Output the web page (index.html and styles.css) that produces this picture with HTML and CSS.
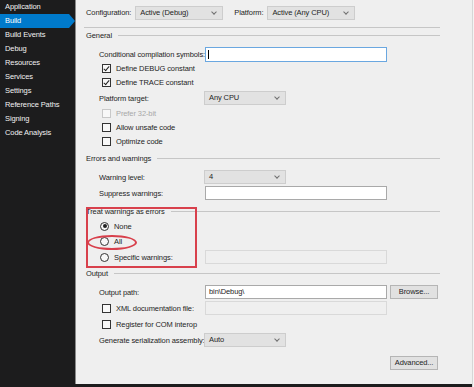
FILE: index.html
```html
<!DOCTYPE html>
<html lang="en">
<head>
  <meta charset="UTF-8">
  <title>Build properties</title>
  <link rel="stylesheet" href="styles.css">
</head>
<body>
  <nav class="sidebar">
    <div class="tab">Application</div>
    <div class="tab active">Build</div>
    <div class="tab">Build Events</div>
    <div class="tab">Debug</div>
    <div class="tab">Resources</div>
    <div class="tab">Services</div>
    <div class="tab">Settings</div>
    <div class="tab">Reference Paths</div>
    <div class="tab">Signing</div>
    <div class="tab">Code Analysis</div>
  </nav>

  <main class="panel">
    <div class="topbar">
      <span>Configuration:</span>
      <div class="select cfg">Active (Debug)</div>
      <span class="plat-label">Platform:</span>
      <div class="select cfg">Active (Any CPU)</div>
    </div>
    <div class="rule"></div>

    <div class="group first">General</div>
    <div class="row field first">
      <span class="label">Conditional compilation symbols:</span>
      <div class="input focus"><span class="caret"></span></div>
    </div>
    <div class="row"><span class="check on"></span>Define DEBUG constant</div>
    <div class="row"><span class="check on"></span>Define TRACE constant</div>
    <div class="row field">
      <span class="label">Platform target:</span>
      <div class="select short">Any CPU</div>
    </div>
    <div class="row disabled"><span class="check"></span>Prefer 32-bit</div>
    <div class="row"><span class="check"></span>Allow unsafe code</div>
    <div class="row"><span class="check"></span>Optimize code</div>

    <div class="group">Errors and warnings</div>
    <div class="row field first">
      <span class="label">Warning level:</span>
      <div class="select short">4</div>
    </div>
    <div class="row field">
      <span class="label">Suppress warnings:</span>
      <div class="input"></div>
    </div>

    <div class="group treat">Treat warnings as errors</div>
    <div class="row radio-row"><span class="radio on"></span>None</div>
    <div class="row radio-row"><span class="radio"></span>All</div>
    <div class="row radio-row field">
      <span class="label radio-label"><span class="radio"></span>Specific warnings:</span>
      <div class="input off"></div>
    </div>

    <div class="group output">Output</div>
    <div class="row field first">
      <span class="label">Output path:</span>
      <div class="input">bin\Debug\</div>
      <div class="button">Browse...</div>
    </div>
    <div class="row field">
      <span class="label check-label"><span class="check"></span>XML documentation file:</span>
      <div class="input off"></div>
    </div>
    <div class="row field"><span class="check"></span>Register for COM interop</div>
    <div class="row field">
      <span class="label">Generate serialization assembly:</span>
      <div class="select short">Auto</div>
    </div>
    <div class="actions">
      <div class="button">Advanced...</div>
    </div>

    <div class="mark-box"></div>
    <div class="mark-ring"></div>
  </main>
  <div class="edge"></div>
</body>
</html>
```

FILE: styles.css
```css
* { margin: 0; padding: 0; box-sizing: border-box; }
body {
  display: flex;
  align-items: flex-start;
  height: 387px;
  background: #1c1c1d;
  font-family: 'Liberation Sans', Arial, sans-serif;
  font-size: 7.5px;
  letter-spacing: -0.1px;
  color: #1e1e1e;
  overflow: hidden;
}
.sidebar {
  width: 75px;
  flex: none;
  font-size: 7.5px;
}
.tab {
  position: relative;
  height: 14px;
  line-height: 13px;
  padding-left: 5px;
  color: #f1f1f1;
  width: 69px;
}
.tab.active {
  background: #007acc;
  color: #fff;
}
.tab.active::after {
  content: '';
  position: absolute;
  right: -6px;
  top: 0;
  border-left: 6px solid #007acc;
  border-top: 7px solid transparent;
  border-bottom: 7px solid transparent;
}
.panel {
  position: relative;
  width: 397px;
  height: 384px;
  flex: none;
  background: #efefef;
  border-left: 1px solid #8a8a8a;
  padding: 5px 32px 0 8px;
}
.edge {
  flex: 1;
  height: 387px;
  background: #f4f4f4;
  border-left: 1px solid #d6d6d6;
}
.topbar {
  display: flex;
  align-items: center;
  height: 15px;
  padding-left: 2px;
}
.topbar .cfg {
  width: 88px;
  margin-left: 4px;
}
.plat-label { margin-left: 11px; }
.rule {
  margin-top: 7px;
  border-top: 1px solid #c6c6c6;
}
.group {
  display: flex;
  align-items: center;
  height: 14px;
  padding-left: 2px;
  margin-top: 3px;
}
.group::after {
  content: '';
  flex: 1;
  margin-left: 6px;
  border-top: 1px solid #c6c6c6;
}
.group.first { margin-top: 0; }
.group.treat { margin-top: 4px; }
.group.output { margin-top: 2px; }
.row {
  display: flex;
  align-items: center;
  height: 14px;
  padding-left: 18px;
}
.row.field { margin-top: 2px; padding-left: 15px; }
.row.field.first { margin-top: 5px; }
.row.radio-row { padding-left: 16px; margin-top: 1px; }
.row.radio-row.field { margin-top: 2px; padding-left: 16px; }
.row.disabled { color: #a8a8a8; margin-top: 1px; }
.row.disabled .check { border-color: #c8c8c8; }
.label {
  display: flex;
  align-items: center;
  width: 106px;
  flex: none;
  white-space: nowrap;
}
.radio-label { width: 105px; }
.check-label { margin-left: 3px; width: 103px; }
.row.field > .check { margin-left: 3px; }
.check {
  position: relative;
  width: 9px;
  height: 9px;
  margin-right: 5px;
  border: 1px solid #333;
  background: #f8f8f8;
  flex: none;
}
.check.on::after {
  content: '';
  position: absolute;
  left: 2px;
  top: 0;
  width: 2px;
  height: 5px;
  border: solid #222;
  border-width: 0 1px 1px 0;
  transform: rotate(40deg);
}
.radio {
  position: relative;
  width: 9px;
  height: 9px;
  margin-right: 5px;
  border: 1px solid #333;
  border-radius: 50%;
  background: #f8f8f8;
  flex: none;
}
.radio.on::after {
  content: '';
  position: absolute;
  left: 1.5px;
  top: 1.5px;
  width: 4px;
  height: 4px;
  border-radius: 50%;
  background: #222;
}
.select {
  position: relative;
  height: 14px;
  line-height: 12px;
  padding-left: 4px;
  background: #e2e2e2;
  border: 1px solid #cdcdcd;
}
.select::after {
  content: '';
  position: absolute;
  right: 6px;
  top: 3px;
  width: 3px;
  height: 3px;
  border: solid #707070;
  border-width: 0 1px 1px 0;
  transform: rotate(45deg);
}
.select.short { width: 82px; margin-left: -1px; }
.input {
  position: relative;
  width: 182px;
  height: 14px;
  line-height: 12px;
  padding-left: 3px;
  background: #fff;
  border: 1px solid #a9a9a9;
}
.input.focus {
  height: 15px;
  border-color: #6aa7e0;
}
.input.off {
  background: #efefef;
  border-color: #d9d9d9;
}
.caret {
  position: absolute;
  left: 2px;
  top: 2px;
  width: 1px;
  height: 9px;
  background: #000;
}
.button {
  width: 48px;
  height: 14px;
  line-height: 12px;
  margin-left: 3px;
  text-align: center;
  background: #e1e1e1;
  border: 1px solid #b5b5b5;
}
.actions {
  display: flex;
  justify-content: flex-end;
  margin-top: 9px;
  padding-right: 2px;
}
.mark-box {
  position: absolute;
  left: 10px;
  top: 207px;
  width: 111px;
  height: 61px;
  border: 2px solid #d8404c;
}
.mark-ring {
  position: absolute;
  left: 11px;
  top: 235px;
  width: 50px;
  height: 15px;
  border: 2px solid #d8404c;
  border-radius: 50%;
}
```
